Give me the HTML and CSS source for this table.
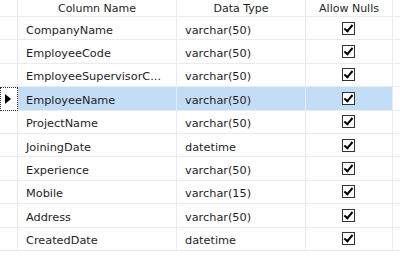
FILE: index.html
```html
<!DOCTYPE html>
<html>
<head>
<meta charset="utf-8">
<link rel="stylesheet" href="styles.css">
</head>
<body>
<div class="grid">
  <div class="gut head"></div>
  <div class="hc">Column Name</div>
  <div class="hc">Data Type</div>
  <div class="hc">Allow Nulls</div>
  <div class="rest head"></div>

  <div class="gut"></div><div class="c">CompanyName</div><div class="c">varchar(50)</div><div class="c cb"><span class="box"></span></div><div class="rest"></div>
  <div class="gut"></div><div class="c">EmployeeCode</div><div class="c">varchar(50)</div><div class="c cb"><span class="box"></span></div><div class="rest"></div>
  <div class="gut"></div><div class="c">EmployeeSupervisorC...</div><div class="c">varchar(50)</div><div class="c cb"><span class="box"></span></div><div class="rest"></div>
  <div class="gut cur"><span class="arrow"></span></div><div class="c sel">EmployeeName</div><div class="c sel">varchar(50)</div><div class="c cb sel"><span class="box"></span></div><div class="rest"></div>
  <div class="gut"></div><div class="c">ProjectName</div><div class="c">varchar(50)</div><div class="c cb"><span class="box"></span></div><div class="rest"></div>
  <div class="gut"></div><div class="c">JoiningDate</div><div class="c">datetime</div><div class="c cb"><span class="box"></span></div><div class="rest"></div>
  <div class="gut"></div><div class="c">Experience</div><div class="c">varchar(50)</div><div class="c cb"><span class="box"></span></div><div class="rest"></div>
  <div class="gut"></div><div class="c">Mobile</div><div class="c">varchar(15)</div><div class="c cb"><span class="box"></span></div><div class="rest"></div>
  <div class="gut"></div><div class="c">Address</div><div class="c">varchar(50)</div><div class="c cb"><span class="box"></span></div><div class="rest"></div>
  <div class="gut"></div><div class="c">CreatedDate</div><div class="c">datetime</div><div class="c cb"><span class="box"></span></div><div class="rest"></div>
</div>
</body>
</html>
```
FILE: styles.css
```css
html, body {
  margin: 0;
  padding: 0;
  background: #ffffff;
}
body {
  width: 400px;
  height: 256px;
  overflow: hidden;
  font-family: "DejaVu Sans", sans-serif;
  font-size: 11px;
  color: #1e1e1e;
}
.grid {
  display: grid;
  grid-template-columns: 18px 159px 129px 87px 1fr;
  grid-template-rows: 17px repeat(10, 23.4px);
}
.gut, .hc, .c, .rest {
  box-sizing: border-box;
  border-right: 1px solid #e8ecef;
  border-bottom: 1px solid #e8ecef;
}
.rest {
  border-right: none;
}
.hc {
  display: flex;
  align-items: center;
  justify-content: center;
  padding-top: 1px;
}
.c {
  display: flex;
  align-items: center;
  padding-left: 8px;
  padding-top: 4px;
  font-size: 11.3px;
  white-space: nowrap;
  overflow: hidden;
}
.cb {
  justify-content: center;
  padding-left: 0;
  padding-top: 0;
  padding-right: 2px;
}
.sel {
  background: #c4ddf6;
}
.cur {
  border: 1px dotted #333333;
  display: flex;
  align-items: center;
  padding-left: 4px;
}
.arrow {
  width: 0;
  height: 0;
  border-top: 5px solid transparent;
  border-bottom: 5px solid transparent;
  border-left: 6px solid #000000;
}
.box {
  display: block;
  width: 13px;
  height: 13px;
  box-sizing: border-box;
  border: 1px solid #333333;
  background: #ffffff;
  position: relative;
}
.box::after {
  content: "";
  position: absolute;
  left: 3px;
  top: 0px;
  width: 3px;
  height: 7px;
  border-right: 2px solid #000000;
  border-bottom: 2px solid #000000;
  transform: rotate(40deg);
}
```
